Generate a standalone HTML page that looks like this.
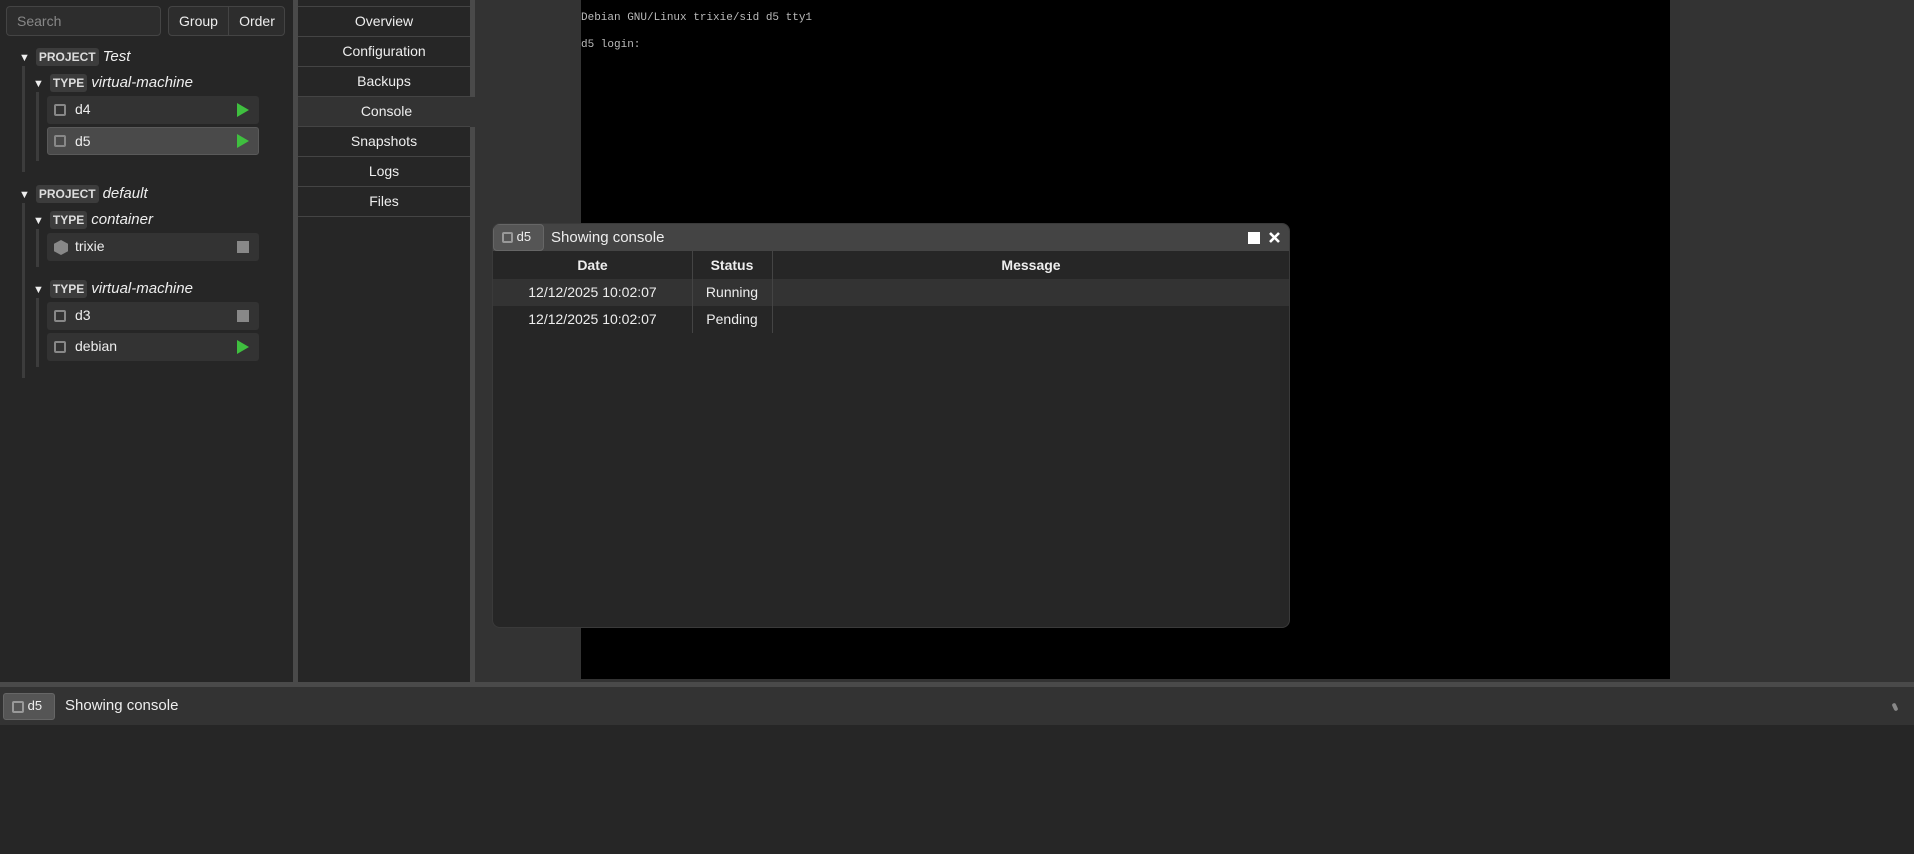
<!DOCTYPE html>
<html><head><meta charset="utf-8"><style>
*{box-sizing:border-box;margin:0;padding:0}
body{width:1914px;height:854px;background:#333;font-family:"Liberation Sans",sans-serif;color:#eee;position:relative;overflow:hidden;font-size:14px}
.a{position:absolute}
.side{left:0;top:0;width:293px;height:682px;background:#262626}
.div1{left:293px;top:0;width:5px;height:682px;background:#4a4a4a}
.tabs{left:298px;top:0;width:172px;height:682px;background:#262626}
.div2{left:470px;top:0;width:5px;height:682px;background:#4a4a4a}
.tab{position:absolute;left:0;width:172px;height:30px;border-bottom:1px solid #444;text-align:center;line-height:29px;font-size:14px;color:#eee}
.term{left:581px;top:0;width:1089px;height:679px;background:#000;font-family:"Liberation Mono",monospace;font-size:11px;color:#bbb}
.hdiv{left:0;top:682px;width:1914px;height:5px;background:#4a4a4a}
.bar{left:0;top:687px;width:1914px;height:38px;background:#333}
.bot{left:0;top:725px;width:1914px;height:129px;background:#262626}
.chip{position:absolute;background:#555;border:1px solid #666;border-radius:3px;color:#eee;font-size:13px}
.cb{display:inline-block;width:12px;height:12px;border:2px solid #888;border-radius:2px;vertical-align:middle}
.item{position:absolute;left:47px;width:212px;height:28px;background:#333;border-radius:3px;font-size:14px;line-height:26px}
.item .cb{position:absolute;left:7px;top:8px}
.item span.n{position:absolute;left:28px}
.play{position:absolute;right:10px;top:7px;width:0;height:0;border-left:12px solid #3fbf3f;border-top:7px solid transparent;border-bottom:7px solid transparent}
.stop{position:absolute;right:10px;top:8px;width:12px;height:12px;background:#888}
.lbl{background:#3c3c3c;font-weight:bold;font-size:12px;padding:2px 3px;border-radius:3px;color:#ddd;margin-right:4px}
.hd{position:absolute;font-size:14px}
.hd i{font-size:15px}
.tri{font-size:11px;margin-right:6px}
.vl{position:absolute;width:3px;background:#3c3c3c}
.dlg{left:492px;top:223px;width:798px;height:405px;background:#262626;border:1px solid #3a3a3a;border-radius:8px;overflow:hidden}
.dh{position:absolute;left:0;top:0;width:100%;height:27px;background:#444}
.th{position:absolute;font-weight:bold;font-size:14px;text-align:center;line-height:28px}
.td{position:absolute;text-align:center;font-size:14px;line-height:27px}
</style></head><body>
<div class="a side">
  <div class="a" style="left:6px;top:6px;width:155px;height:30px;border:1px solid #444;border-radius:4px;background:#2d2d2d;color:#888;font-size:14px;line-height:28px;padding-left:10px">Search</div>
  <div class="a" style="left:168px;top:6px;width:117px;height:30px;border:1px solid #444;border-radius:4px;background:#2d2d2d;font-size:14px;line-height:28px">
    <span class="a" style="left:0;width:59px;text-align:center">Group</span>
    <span class="a" style="left:59px;top:0;width:1px;height:28px;background:#444"></span>
    <span class="a" style="left:60px;width:56px;text-align:center">Order</span>
  </div>
  <div class="hd" style="left:19px;top:48px"><span class="tri">▼</span><span class="lbl">PROJECT</span><i>Test</i></div>
  <div class="vl" style="left:22px;top:66px;height:106px"></div>
  <div class="hd" style="left:33px;top:74px"><span class="tri">▼</span><span class="lbl">TYPE</span><i>virtual-machine</i></div>
  <div class="vl" style="left:36px;top:92px;height:69px"></div>
  <div class="item" style="top:96px"><span class="cb"></span><span class="n">d4</span><span class="play"></span></div>
  <div class="item" style="top:127px;background:#4a4a4a;border:1px solid #5a5a5a"><span class="cb" style="top:7px;left:6px"></span><span class="n" style="left:27px">d5</span><span class="play" style="top:6px;right:9px"></span></div>

  <div class="hd" style="left:19px;top:185px"><span class="tri">▼</span><span class="lbl">PROJECT</span><i>default</i></div>
  <div class="vl" style="left:22px;top:203px;height:175px"></div>
  <div class="hd" style="left:33px;top:211px"><span class="tri">▼</span><span class="lbl">TYPE</span><i>container</i></div>
  <div class="vl" style="left:36px;top:229px;height:38px"></div>
  <div class="item" style="top:233px"><svg class="a" style="left:7px;top:7px" width="14" height="15" viewBox="0 0 14 15"><polygon points="7,0 14,3.8 14,11.2 7,15 0,11.2 0,3.8" fill="#888"/></svg><span class="n">trixie</span><span class="stop"></span></div>
  <div class="hd" style="left:33px;top:280px"><span class="tri">▼</span><span class="lbl">TYPE</span><i>virtual-machine</i></div>
  <div class="vl" style="left:36px;top:298px;height:69px"></div>
  <div class="item" style="top:302px"><span class="cb"></span><span class="n">d3</span><span class="stop"></span></div>
  <div class="item" style="top:333px"><span class="cb"></span><span class="n">debian</span><span class="play"></span></div>
</div>
<div class="a div1"></div>
<div class="a tabs">
  <div class="tab" style="top:-23px"></div>
  <div class="tab" style="top:7px">Overview</div>
  <div class="tab" style="top:37px">Configuration</div>
  <div class="tab" style="top:67px">Backups</div>
  <div class="tab" style="top:97px;background:#333;width:177px">Console</div>
  <div class="tab" style="top:127px">Snapshots</div>
  <div class="tab" style="top:157px">Logs</div>
  <div class="tab" style="top:187px">Files</div>
</div>
<div class="a div2"></div>
<div class="a" style="left:470px;top:97px;width:5px;height:30px;background:#333"></div>
<div class="a term"><div class="a" style="left:0;top:12px">Debian GNU/Linux trixie/sid d5 tty1</div><div class="a" style="left:0;top:39px">d5 login:</div></div>

<div class="a dlg">
  <div class="dh">
    <div class="chip" style="left:0;top:0;width:51px;height:27px;line-height:24px;padding-left:8px;border-radius:4px"><span class="cb" style="width:11px;height:11px;border-color:#999"></span> d5</div>
    <div class="a" style="left:58px;top:5px;font-size:15px">Showing console</div>
    <div class="a" style="left:755px;top:8px;width:12px;height:12px;background:#fff"></div>
    <svg class="a" style="left:775px;top:7px" width="13" height="13" viewBox="0 0 13 13"><path d="M2 2L11 11M11 2L2 11" stroke="#fff" stroke-width="2.6"/></svg>
  </div>
  <div class="a" style="left:0;top:27px;width:100%;height:28px;background:#262626"></div>
  <div class="th" style="left:0;top:27px;width:199px">Date</div>
  <div class="th" style="left:199px;top:27px;width:80px">Status</div>
  <div class="th" style="left:279px;top:27px;width:518px">Message</div>
  <div class="a" style="left:0;top:55px;width:100%;height:27px;background:#333"></div>
  <div class="td" style="left:0;top:55px;width:199px">12/12/2025 10:02:07</div>
  <div class="td" style="left:199px;top:55px;width:80px">Running</div>
  <div class="td" style="left:0;top:82px;width:199px">12/12/2025 10:02:07</div>
  <div class="td" style="left:199px;top:82px;width:80px">Pending</div>
  <div class="a" style="left:199px;top:27px;width:1px;height:82px;background:#444"></div>
  <div class="a" style="left:279px;top:27px;width:1px;height:82px;background:#444"></div>
</div>

<div class="a hdiv"></div>
<div class="a bar">
  <div class="chip" style="left:3px;top:6px;width:52px;height:27px;line-height:24px;padding-left:8px"><span class="cb" style="width:12px;height:12px;border-color:#999"></span> d5</div>
  <div class="a" style="left:65px;top:10px;font-size:15px">Showing console</div>
  <div class="a" style="left:1893px;top:16px;width:4px;height:8px;background:#888;border-radius:2px;transform:rotate(-25deg)"></div>
</div>
<div class="a bot"></div>
</body></html>
